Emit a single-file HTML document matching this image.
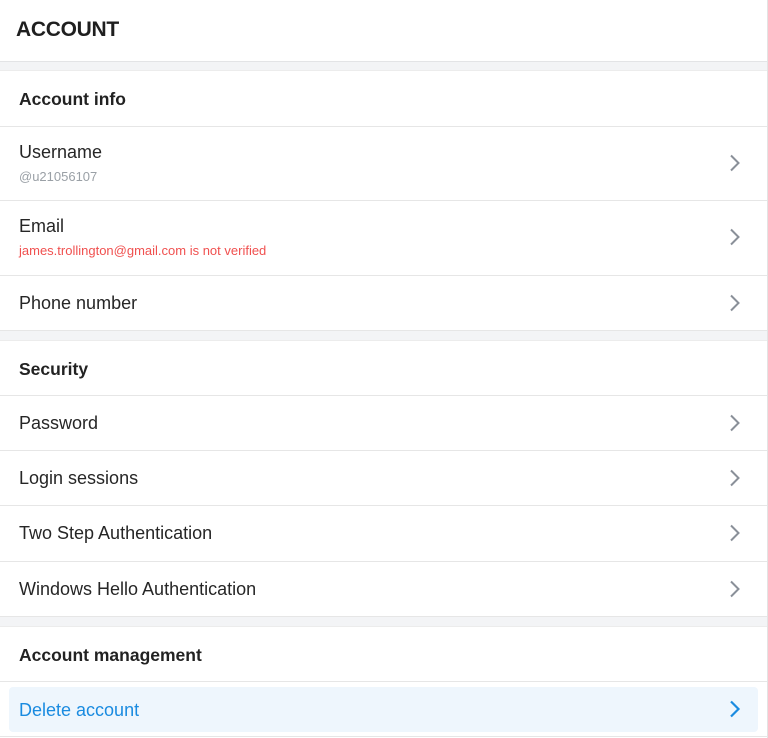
<!DOCTYPE html>
<html><head><style>
*{margin:0;padding:0;box-sizing:border-box}
body{width:768px;height:738px;overflow:hidden;background:#fff;font-family:"Liberation Sans",Roboto,sans-serif;color:#222;position:relative}
.wrap{position:absolute;left:0;top:0;width:768px;height:738px;border-right:1px solid #e3e3e3}
.hdr{height:62px;border-bottom:1px solid #e3e4e6;padding:18px 0 0 16px;font-size:21px;font-weight:bold;color:#1f1f1f;letter-spacing:-0.3px}
.gap{height:9px;background:#f3f4f6;border-bottom:1px solid #ececec}
.sec{height:56px;border-bottom:1px solid #e6e6e6;padding:18px 0 0 19px;font-size:17.5px;font-weight:bold;color:#222}
.row{position:relative;border-bottom:1px solid #e6e6e6;padding-left:19px;font-size:18px;color:#262626}
.row .t{position:absolute;left:19px}
.row .s{position:absolute;left:19px;font-size:13px}
.chev{position:absolute;right:26px;width:14px;height:20px}
</style></head><body><div class="wrap">
<div class="hdr">ACCOUNT</div>
<div class="gap"></div>
<div class="sec">Account info</div>
<div class="row" style="height:74px"><span class="t" style="top:15px">Username</span><span class="s" style="top:42px;color:#9aa0a6">@u21056107</span>
<svg class="chev" style="top:26px" viewBox="0 0 14 20"><path d="M4 2.5l7.5 7.5-7.5 7.5" fill="none" stroke="#8a9099" stroke-width="2"/></svg></div>
<div class="row" style="height:75px"><span class="t" style="top:15px">Email</span><span class="s" style="top:42px;color:#f0504f">james.trollington@gmail.com is not verified</span>
<svg class="chev" style="top:26px" viewBox="0 0 14 20"><path d="M4 2.5l7.5 7.5-7.5 7.5" fill="none" stroke="#8a9099" stroke-width="2"/></svg></div>
<div class="row" style="height:55px"><span class="t" style="top:17px">Phone number</span>
<svg class="chev" style="top:17px" viewBox="0 0 14 20"><path d="M4 2.5l7.5 7.5-7.5 7.5" fill="none" stroke="#8a9099" stroke-width="2"/></svg></div>
<div class="gap" style="height:10px"></div>
<div class="sec" style="height:55px">Security</div>
<div class="row" style="height:55px"><span class="t" style="top:17px">Password</span><svg class="chev" style="top:17px" viewBox="0 0 14 20"><path d="M4 2.5l7.5 7.5-7.5 7.5" fill="none" stroke="#8a9099" stroke-width="2"/></svg></div>
<div class="row" style="height:55px"><span class="t" style="top:17px">Login sessions</span><svg class="chev" style="top:17px" viewBox="0 0 14 20"><path d="M4 2.5l7.5 7.5-7.5 7.5" fill="none" stroke="#8a9099" stroke-width="2"/></svg></div>
<div class="row" style="height:56px"><span class="t" style="top:17px">Two Step Authentication</span><svg class="chev" style="top:17px" viewBox="0 0 14 20"><path d="M4 2.5l7.5 7.5-7.5 7.5" fill="none" stroke="#8a9099" stroke-width="2"/></svg></div>
<div class="row" style="height:55px"><span class="t" style="top:17px">Windows Hello Authentication</span><svg class="chev" style="top:17px" viewBox="0 0 14 20"><path d="M4 2.5l7.5 7.5-7.5 7.5" fill="none" stroke="#8a9099" stroke-width="2"/></svg></div>
<div class="gap" style="height:10px"></div>
<div class="sec" style="height:55px">Account management</div>
<div style="position:absolute;left:9px;top:687px;width:749px;height:45px;background:#eef6fd;border-radius:4px">
<span style="position:absolute;left:10px;top:13px;font-size:18px;color:#1a8be0">Delete account</span>
<svg style="position:absolute;right:17px;top:12px;width:14px;height:20px" viewBox="0 0 14 20"><path d="M4 2.5l7.5 7.5-7.5 7.5" fill="none" stroke="#1a8be0" stroke-width="2.2"/></svg></div>
<div style="position:absolute;left:0;top:736px;width:768px;height:1px;background:#e6e6e6"></div>
</div></body></html>
